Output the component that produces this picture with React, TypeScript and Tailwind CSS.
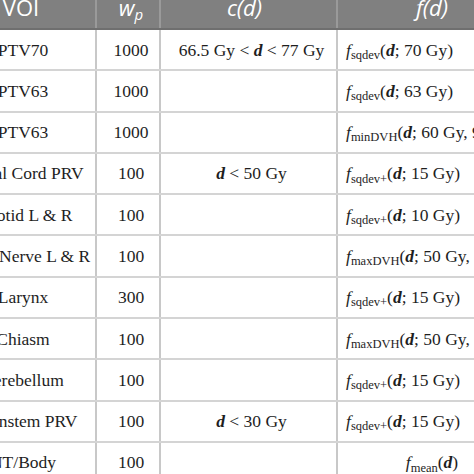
import React from "react";

const serif = { fontFamily: '"Liberation Serif", "Times New Roman", serif' };
const sans = { fontFamily: '"Open Sans", "DejaVu Sans", sans-serif' };

function D() {
  return <b className="italic font-bold">d</b>;
}

function F({ sub, args }: { sub: string; args: string }) {
  return (
    <span>
      <i>f</i>
      <sub className="text-[12.5px]">{sub}</sub>(<D />; {args})
    </span>
  );
}

type Row = {
  voi: string;
  wp: string;
  c: React.ReactNode;
  f: React.ReactNode;
  center?: boolean;
};

const rows: Row[] = [
  { voi: "PTV70", wp: "1000", c: <span>66.5 Gy &lt; <D /> &lt; 77 Gy</span>, f: <F sub="sqdev" args="70 Gy" /> },
  { voi: "PTV63", wp: "1000", c: null, f: <F sub="sqdev" args="63 Gy" /> },
  { voi: "PTV63", wp: "1000", c: null, f: <F sub="minDVH" args="60 Gy, 95%" /> },
  { voi: "Spinal Cord PRV", wp: "100", c: <span><D /> &lt; 50 Gy</span>, f: <F sub="sqdev+" args="15 Gy" /> },
  { voi: "Parotid L & R", wp: "100", c: null, f: <F sub="sqdev+" args="10 Gy" /> },
  { voi: "Optic Nerve L & R", wp: "100", c: null, f: <F sub="maxDVH" args="50 Gy, 1%" /> },
  { voi: "Larynx", wp: "300", c: null, f: <F sub="sqdev+" args="15 Gy" /> },
  { voi: "Chiasm", wp: "100", c: null, f: <F sub="maxDVH" args="50 Gy, 1%" /> },
  { voi: "Cerebellum", wp: "100", c: null, f: <F sub="sqdev+" args="15 Gy" /> },
  { voi: "Brainstem PRV", wp: "100", c: <span><D /> &lt; 30 Gy</span>, f: <F sub="sqdev+" args="15 Gy" /> },
  {
    voi: "NT/Body",
    wp: "100",
    c: null,
    f: (
      <span>
        <i>f</i>
        <sub className="text-[12.5px]">mean</sub>(<D />)
      </span>
    ),
    center: true,
  },
];

export default function App() {
  return (
    <div className="w-[474px] h-[474px] overflow-hidden bg-white">
      <div className="ml-[-55px] w-[581px]">
        <div
          className="grid grid-cols-[152px_64px_177px_188px] h-[30px] bg-[#808080] border-b-2 border-[#6f6f6f] text-white text-[22px] leading-none"
          style={sans}
        >
          <div className="flex items-start justify-center pl-[2px] border-r-2 border-[#9a9a9a] -mt-[4px]">VOI</div>
          <div className="flex items-start justify-center pl-[6px] border-r-2 border-[#9a9a9a] -mt-[4px]">
            <span className="italic">
              w<sub className="text-[15px]">p</sub>
            </span>
          </div>
          <div className="flex items-start justify-center pr-[8px] border-r-2 border-[#9a9a9a] -mt-[4px] italic">c(d)</div>
          <div className="flex items-start justify-center -mt-[4px] italic">f(d)</div>
        </div>
        {rows.map((r, i) => (
          <div
            key={i}
            className="grid grid-cols-[152px_64px_177px_188px] h-[41.3px] border-b-2 border-[#d4d4d4] text-[17.5px] text-[#1e1e1e]"
            style={serif}
          >
            <div className="flex items-center justify-center pl-[6px] border-r-2 border-[#c8c8c8] whitespace-nowrap">{r.voi}</div>
            <div className="flex items-center justify-center pl-[6px] border-r-2 border-[#c8c8c8]">{r.wp}</div>
            <div className="flex items-center justify-center pl-[6px] border-r-2 border-[#c8c8c8] whitespace-nowrap">{r.c}</div>
            <div
              className={
                r.center
                  ? "flex items-center justify-center whitespace-nowrap"
                  : "flex items-center justify-start pl-[8px] whitespace-nowrap"
              }
            >
              {r.f}
            </div>
          </div>
        ))}
      </div>
    </div>
  );
}
